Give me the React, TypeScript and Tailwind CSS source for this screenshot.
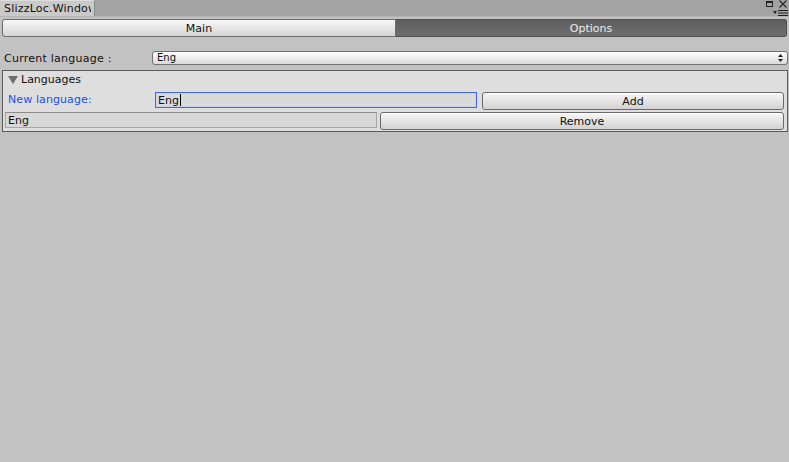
import React from "react";

const font = { fontFamily: '"DejaVu Sans", Verdana, sans-serif' };

function Btn({ label, className }: { label: string; className: string }) {
  return (
    <div
      className={
        "flex items-center justify-center rounded-[3px] border border-[#6a6a6a] bg-gradient-to-b from-[#f7f7f7] to-[#d2d2d2] text-[11px] text-[#111] shadow-[inset_0_1px_0_#ffffff] " +
        className
      }
    >
      {label}
    </div>
  );
}

export default function App() {
  return (
    <div
      className="w-[789px] h-[462px] bg-[#c2c2c2] overflow-hidden text-[11px] leading-none text-[#111]"
      style={font}
    >
      {/* Title bar */}
      <div className="h-[17px] bg-[#a3a3a3] flex items-end relative border-b border-[#b4b4b4]">
        <div className="h-[16px] w-[95px] bg-[#cacaca] border-r border-t border-[#8a8a8a] border-t-[#dcdcdc] rounded-tr-[2px] flex items-center pl-[4px]">
          <div className="w-[87px] overflow-hidden whitespace-nowrap text-[11px] text-[#111] tracking-[0.2px]">
            SlizzLoc.Window
          </div>
        </div>
        <div className="absolute right-[2px] top-0 flex items-start gap-[6px]">
          <svg width="7" height="7" viewBox="0 0 7 7" className="mt-[1px]">
            <rect x="0.5" y="0.5" width="6" height="5" fill="none" stroke="#222" />
            <rect x="0" y="0" width="7" height="2" fill="#222" />
          </svg>
          <svg width="8" height="8" viewBox="0 0 8 8">
            <path d="M0.5 0.5 L7.5 7.5 M7.5 0.5 L0.5 7.5" stroke="#222" strokeWidth="1.1" />
          </svg>
        </div>
        <div className="absolute right-[1px] top-[10px]">
          <svg width="15" height="6" viewBox="0 0 15 6">
            <path d="M0 1 L4 1 L2 4 Z" fill="#222" />
            <rect x="5" y="0" width="10" height="1" fill="#222" />
            <rect x="5" y="2.5" width="10" height="1" fill="#222" />
            <rect x="5" y="5" width="10" height="1" fill="#222" />
          </svg>
        </div>
      </div>

      {/* Toolbar */}
      <div className="pt-[2px] pl-[2px] pr-[2px] flex">
        <div className="w-[394px] h-[18px] rounded-l-[3px] border border-[#6c6c6c] bg-gradient-to-b from-[#f8f8f8] to-[#d4d4d4] flex items-center justify-center text-[11px] text-[#111]">
          Main
        </div>
        <div className="flex-1 h-[18px] rounded-r-[3px] border border-l-0 border-[#4e4e4e] bg-gradient-to-b from-[#5f5f5f] to-[#6e6e6e] flex items-center justify-center text-[11px] text-[#ececec]">
          Options
        </div>
      </div>

      {/* Current language */}
      <div className="mt-[14px] flex items-center h-[14px]">
        <div className="w-[152px] pl-[4px] text-[11px] tracking-[0.25px]">Current language :</div>
        <div className="w-[636px] h-[14px] rounded-[3px] border border-[#707070] bg-gradient-to-b from-[#ffffff] to-[#dadada] flex items-center pl-[4px] text-[10px] relative">
          Eng
          <svg width="5" height="8" viewBox="0 0 5 8" className="absolute right-[4px] top-[2px]">
            <path d="M2.5 0 L5 3 L0 3 Z M2.5 8 L5 5 L0 5 Z" fill="#222" />
          </svg>
        </div>
      </div>

      {/* Languages box */}
      <div className="mt-[5px] ml-[2px] w-[786px] border border-[#5c5c5c] bg-[#dedede] pb-[1px]">
        <div className="h-[21px] flex items-start pt-[3px] pl-[5px]">
          <svg width="10" height="8" viewBox="0 0 10 8" className="mt-[2px]">
            <path d="M0 0 L10 0 L5 8 Z" fill="#6e6e6e" />
          </svg>
          <span className="ml-[3px] text-[11px]">Languages</span>
        </div>
        <div className="h-[19px] flex items-start">
          <div className="w-[152px] pl-[5px] pt-[2px] text-[11px] text-[#2150e0] tracking-[0.1px]">New language:</div>
          <div className="w-[322px] h-[16px] border border-[#4466e0] bg-[#dadada] flex items-center pl-[2px] text-[11px] shadow-[inset_0_0_0_1px_#c8d0ee]">
            Eng
            <span className="inline-block w-[1px] h-[12px] bg-[#000] ml-[1px]" />
          </div>
          <Btn label="Add" className="ml-[5px] w-[302px] h-[18px]" />
        </div>
        <div className="mt-[1px] h-[18px] flex items-start">
          <div className="ml-[2px] w-[372px] h-[16px] border border-[#a5a5a5] border-t-[#8c8c8c] bg-[#d8d8d8] flex items-center pl-[2px] text-[11px]">
            Eng
          </div>
          <Btn label="Remove" className="ml-[3px] w-[404px] h-[18px]" />
        </div>
      </div>
    </div>
  );
}
